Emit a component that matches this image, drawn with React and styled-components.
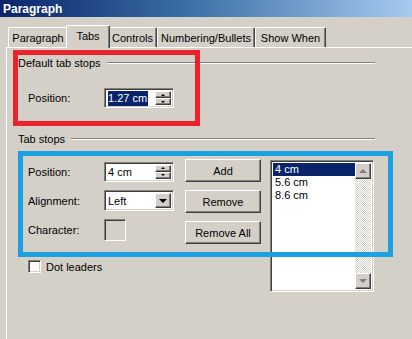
import React from "react";
import styled, { createGlobalStyle } from "styled-components";

const GlobalStyle = createGlobalStyle`
  html, body { margin: 0; padding: 0; background: #d4d0c8; }
  body { font-family: "Liberation Sans", Arial, sans-serif; font-size: 11px; color: #000; }
`;

const Window = styled.div`
  position: relative;
  width: 412px;
  height: 339px;
  background: #d4d0c8;
  display: flex;
  flex-direction: column;
  overflow: hidden;
`;

const TitleBar = styled.div`
  height: 17px;
  flex: none;
  display: flex;
  align-items: center;
  padding-left: 3px;
  background: linear-gradient(to right, #0a246a 0%, #3a6ea5 45%, #a6caf0 100%);
  color: #fff;
  font-weight: bold;
  font-size: 12px;
`;

const TabStrip = styled.div`
  display: flex;
  align-items: flex-end;
  height: 22px;
  margin-top: 8px;
  padding-left: 8px;
  flex: none;
`;

const Tab = styled.div`
  position: relative;
  box-sizing: border-box;
  width: ${(p) => p.$w}px;
  height: ${(p) => (p.$active ? 23 : 20)}px;
  margin: ${(p) => (p.$active ? "0 -2px -1px -2px" : "0")};
  z-index: ${(p) => (p.$active ? 2 : 1)};
  display: flex;
  align-items: center;
  justify-content: center;
  padding-bottom: ${(p) => (p.$active ? 3 : 0)}px;
  background: #d4d0c8;
  border-top: 1px solid #fff;
  border-left: 1px solid #fff;
  border-right: 1px solid #404040;
  border-radius: 2px 2px 0 0;
  box-shadow: inset -1px 0 #808080;
  white-space: nowrap;
`;

const Panel = styled.div`
  flex: 1;
  margin-left: 6px;
  border-top: 1px solid #fff;
  border-left: 1px solid #fff;
  padding: 8px 0 0 11px;
`;

const GroupHeader = styled.div`
  display: flex;
  align-items: center;
  gap: 6px;
  width: 357px;
  height: 14px;
  margin-top: ${(p) => p.$top || 0}px;
`;

const GroupLine = styled.div`
  flex: 1;
  border-top: 1px solid #808080;
  border-bottom: 1px solid #fff;
`;

const FieldRow = styled.div`
  display: flex;
  align-items: center;
  height: ${(p) => p.$h || 21}px;
  margin-top: ${(p) => p.$top || 0}px;
  padding-left: ${(p) => p.$indent || 0}px;
`;

const Label = styled.span`
  width: 76px;
  flex: none;
`;

const Sunken = styled.div`
  box-sizing: border-box;
  display: flex;
  align-items: stretch;
  width: ${(p) => p.$w}px;
  height: ${(p) => p.$h}px;
  background: ${(p) => (p.$disabled ? "#d4d0c8" : "#fff")};
  border: 1px solid;
  border-color: #808080 #fff #fff #808080;
  box-shadow: inset 1px 1px #404040, inset -1px -1px #d4d0c8;
  padding: 2px;
`;

const FieldText = styled.div`
  flex: 1;
  display: flex;
  align-items: center;
  padding-left: 1px;
`;

const Highlight = styled.span`
  background: #0a246a;
  color: #fff;
  line-height: 15px;
  padding-right: 1px;
`;

const SpinStack = styled.div`
  width: 16px;
  display: flex;
  flex-direction: column;
`;

const RaisedButton = styled.div`
  box-sizing: border-box;
  flex: 1;
  display: flex;
  align-items: center;
  justify-content: center;
  background: #d4d0c8;
  border: 1px solid;
  border-color: #fff #404040 #404040 #fff;
  box-shadow: inset -1px -1px #808080;
`;

const Arrow = styled.div`
  width: 0;
  height: 0;
  border-left: ${(p) => p.$size}px solid transparent;
  border-right: ${(p) => p.$size}px solid transparent;
  ${(p) => (p.$down ? "border-top" : "border-bottom")}: ${(p) => p.$size}px solid ${(p) =>
      p.$grey ? "#808080" : "#000"};
`;

const DropButton = styled(RaisedButton)`
  flex: none;
  width: 16px;
`;

const TabStopsArea = styled.div`
  display: flex;
  align-items: flex-start;
  margin-top: 13px;
  padding-left: 10px;
`;

const LeftArea = styled.div`
  display: flex;
  flex-direction: column;
`;

const FieldsAndButtons = styled.div`
  display: flex;
  align-items: flex-start;
  gap: 11px;
`;

const Fields = styled.div`
  display: flex;
  flex-direction: column;
  gap: 8px;
  margin-top: 2px;
`;

const Buttons = styled.div`
  display: flex;
  flex-direction: column;
  gap: 8px;
`;

const PushButton = styled.button`
  box-sizing: border-box;
  width: 76px;
  height: 23px;
  padding: 0;
  font: inherit;
  color: #000;
  background: #d4d0c8;
  border: 1px solid;
  border-color: #fff #404040 #404040 #fff;
  box-shadow: inset -1px -1px #808080;
`;

const CheckRow = styled.label`
  display: flex;
  align-items: center;
  gap: 5px;
  margin-top: 16px;
`;

const CheckBox = styled.span`
  box-sizing: border-box;
  width: 13px;
  height: 13px;
  background: #fff;
  border: 1px solid;
  border-color: #808080 #fff #fff #808080;
  box-shadow: inset 1px 1px #404040, inset -1px -1px #d4d0c8;
`;

const ListBox = styled.div`
  box-sizing: border-box;
  width: 104px;
  height: 132px;
  margin-left: 9px;
  margin-top: 1px;
  display: flex;
  background: #fff;
  border: 1px solid;
  border-color: #808080 #fff #fff #808080;
  box-shadow: inset 1px 1px #404040, inset -1px -1px #d4d0c8;
  padding: 2px 2px 2px 2px;
`;

const ListItems = styled.div`
  flex: 1;
  display: flex;
  flex-direction: column;
`;

const ListItem = styled.div`
  height: 13px;
  line-height: 13px;
  padding-left: 2px;
  background: ${(p) => (p.$selected ? "#0a246a" : "transparent")};
  color: ${(p) => (p.$selected ? "#fff" : "#000")};
`;

const ScrollBar = styled.div`
  width: 16px;
  display: flex;
  flex-direction: column;
  justify-content: space-between;
  background: repeating-conic-gradient(#fff 0 25%, #d4d0c8 0 50%) 0 0 / 2px 2px;
`;

const ScrollButton = styled(RaisedButton)`
  flex: none;
  height: 16px;
`;

const Annotation = styled.div`
  position: absolute;
  box-sizing: border-box;
  left: ${(p) => p.$x}px;
  top: ${(p) => p.$y}px;
  width: ${(p) => p.$w}px;
  height: ${(p) => p.$h}px;
  border: 5px solid ${(p) => p.$color};
  pointer-events: none;
`;

const tabs = [
  { label: "Paragraph", w: 60 },
  { label: "Tabs", w: 44, active: true },
  { label: "Controls", w: 49 },
  { label: "Numbering/Bullets", w: 98 },
  { label: "Show When", w: 71 },
];

function SpinField({ children }) {
  return (
    <Sunken $w={70} $h={20}>
      <FieldText>{children}</FieldText>
      <SpinStack>
        <RaisedButton>
          <Arrow $size={2} />
        </RaisedButton>
        <RaisedButton>
          <Arrow $size={2} $down />
        </RaisedButton>
      </SpinStack>
    </Sunken>
  );
}

export default function App() {
  return (
    <>
      <GlobalStyle />
      <Window>
        <TitleBar>Paragraph</TitleBar>
        <TabStrip>
          {tabs.map((t) => (
            <Tab key={t.label} $w={t.w} $active={t.active}>
              {t.label}
            </Tab>
          ))}
        </TabStrip>
        <Panel>
          <GroupHeader>
            <span>Default tab stops</span>
            <GroupLine />
          </GroupHeader>
          <FieldRow $top={18} $h={20} $indent={10}>
            <Label>Position:</Label>
            <SpinField>
              <Highlight>1.27 cm</Highlight>
            </SpinField>
          </FieldRow>

          <GroupHeader $top={24}>
            <span>Tab stops</span>
            <GroupLine />
          </GroupHeader>
          <TabStopsArea>
            <LeftArea>
              <FieldsAndButtons>
                <Fields>
                  <FieldRow>
                    <Label>Position:</Label>
                    <SpinField>4 cm</SpinField>
                  </FieldRow>
                  <FieldRow>
                    <Label>Alignment:</Label>
                    <Sunken $w={70} $h={21}>
                      <FieldText>Left</FieldText>
                      <DropButton>
                        <Arrow $size={4} $down />
                      </DropButton>
                    </Sunken>
                  </FieldRow>
                  <FieldRow $h={22}>
                    <Label>Character:</Label>
                    <Sunken $w={22} $h={22} $disabled />
                  </FieldRow>
                </Fields>
                <Buttons>
                  <PushButton>Add</PushButton>
                  <PushButton>Remove</PushButton>
                  <PushButton>Remove All</PushButton>
                </Buttons>
              </FieldsAndButtons>
              <CheckRow>
                <CheckBox />
                Dot leaders
              </CheckRow>
            </LeftArea>
            <ListBox>
              <ListItems>
                <ListItem $selected>4 cm</ListItem>
                <ListItem>5.6 cm</ListItem>
                <ListItem>8.6 cm</ListItem>
              </ListItems>
              <ScrollBar>
                <ScrollButton>
                  <Arrow $size={4} $grey />
                </ScrollButton>
                <ScrollButton>
                  <Arrow $size={4} $down $grey />
                </ScrollButton>
              </ScrollBar>
            </ListBox>
          </TabStopsArea>
        </Panel>

        <Annotation $x={13} $y={50} $w={187} $h={76} $color="#e8232b" />
        <Annotation $x={18} $y={151} $w={375} $h={106} $color="#1ba1e2" />
      </Window>
    </>
  );
}
